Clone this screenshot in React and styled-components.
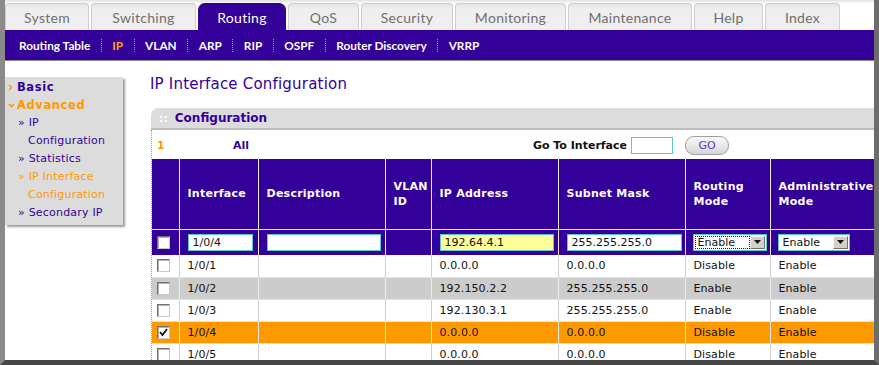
import React from 'react';
import styled, { createGlobalStyle } from 'styled-components';

const PURPLE = '#330099';
const ORANGE = '#ff9900';
const VERDANA = '"DejaVu Sans", Verdana, sans-serif';
const FUTURA = 'Lato, "Noto Sans", sans-serif';

const Global = createGlobalStyle`
  html, body { margin: 0; padding: 0; background: #fff; }
  * { box-sizing: border-box; }
`;

const Frame = styled.div`
  width: 879px;
  height: 365px;
  overflow: hidden;
  border-style: solid;
  border-width: 0 5px 5px 5px;
  border-color: #888 #6c6c6c #474747 #8a8a8a;
  background: #fff;
  display: flex;
  flex-direction: column;
`;

/* top tabs */
const TabBar = styled.div`
  display: flex;
  gap: 2px;
  height: 30px;
  padding-top: 3px;
  background: linear-gradient(#e2e2e2, #fff 4px);
  flex-shrink: 0;
`;

const Tab = styled.div`
  width: ${({ w }) => w}px;
  height: 27px;
  border: 1px solid ${({ active }) => (active ? PURPLE : '#cfcfcf')};
  border-bottom: none;
  border-radius: ${({ active }) => (active ? '7px 7px 0 0' : '4px 4px 0 0')};
  background: ${({ active }) =>
    active ? PURPLE : 'linear-gradient(#e4e4e4, #efefef 5px)'};
  color: ${({ active }) => (active ? '#fff' : '#707070')};
  font-family: ${FUTURA};
  font-size: 14px;
  letter-spacing: 0.3px;
  display: flex;
  align-items: center;
  justify-content: center;
`;

const SubNav = styled.div`
  height: 31px;
  background: ${PURPLE};
  border-bottom: 1px solid #8a8a8a;
  display: flex;
  align-items: center;
  padding-left: 14px;
  flex-shrink: 0;
  font-family: ${FUTURA};
  font-weight: 700;
  font-size: 11.8px;
  color: #fff;
`;

const SubItem = styled.span`
  color: ${({ active }) => (active ? '#ffa21a' : '#fff')};
`;

const SubSep = styled.span`
  display: inline-block;
  width: 0;
  height: 13px;
  border-left: 1px dotted rgba(255, 255, 255, 0.55);
  margin: 0 10.5px;
`;

/* body */
const Body = styled.div`
  display: flex;
  align-items: flex-start;
  flex: 1;
  min-height: 0;
`;

const Sidebar = styled.div`
  width: 118px;
  height: 148px;
  margin-top: 16px;
  background: #dcdcdc;
  box-shadow: 2px 2px 2px #9a9a9a;
  padding: 1px 0 0 3px;
  font-family: ${VERDANA};
  font-size: 11px;
  line-height: 18px;
  flex-shrink: 0;
`;

const NavHead = styled.div`
  font-weight: 700;
  font-size: 11.5px;
  letter-spacing: 0.6px;
  color: ${({ open }) => (open ? ORANGE : PURPLE)};
  display: flex;
  align-items: center;
`;

const Arrow = styled.span`
  width: 9px;
  display: flex;
  align-items: center;
`;

const NavItem = styled.div`
  color: ${({ active }) => (active ? ORANGE : PURPLE)};
  padding-left: ${({ cont }) => (cont ? 20 : 10)}px;
  letter-spacing: 0.2px;
  white-space: nowrap;
`;

const Main = styled.div`
  flex: 1;
  margin-left: 28px;
  padding-top: 14px;
  min-width: 0;
`;

const Title = styled.h1`
  margin: 0 0 15px -1px;
  font-family: ${VERDANA};
  font-weight: 400;
  font-size: 15px;
  line-height: 18px;
  color: ${PURPLE};
  letter-spacing: 0.2px;
`;

const BoxHead = styled.div`
  height: 22px;
  background: #dcdcdc;
  border-bottom: 2px solid #bdbdbd;
  border-top-left-radius: 7px;
  display: flex;
  align-items: center;
  padding-left: 8px;
  font-family: ${VERDANA};
  font-weight: 700;
  font-size: 12px;
  color: ${PURPLE};
`;

const Dots = styled.span`
  color: #fff;
  margin-right: 7px;
  font-size: 11px;
`;

const BoxBody = styled.div`
  border-left: 1px dotted #a0a0a0;
`;

const Toolbar = styled.div`
  height: 29px;
  display: flex;
  align-items: center;
  padding: 1px 145px 0 5px;
  font-family: ${VERDANA};
  font-weight: 700;
  font-size: 11px;
`;

const PageNum = styled.span`
  color: ${ORANGE};
  width: 76px;
`;

const AllLink = styled.span`
  color: ${PURPLE};
  flex: 1;
`;

const GoLabel = styled.span`
  color: #111;
`;

const GoInput = styled.div`
  width: 42px;
  height: 17px;
  margin-left: 4px;
  border: 1px solid #5cc8c8;
  background: #fff;
`;

const GoButton = styled.div`
  width: 44px;
  height: 19px;
  margin-left: 12px;
  border: 1px solid #a0a0a0;
  border-radius: 9px;
  background: linear-gradient(#fafafa, #d6d6d6);
  color: #6633cc;
  font-weight: 400;
  font-size: 11px;
  display: flex;
  align-items: center;
  justify-content: center;
`;

const Table = styled.table`
  table-layout: fixed;
  width: 722px;
  border-collapse: collapse;
  font-family: ${VERDANA};
  font-size: 11px;
`;

const Th = styled.th`
  background: ${PURPLE};
  color: #fff;
  font-weight: 700;
  letter-spacing: 0.25px;
  text-align: left;
  vertical-align: middle;
  padding: 0 0 0 8px;
  height: 70px;
  line-height: 15px;
  white-space: nowrap;
  border-left: 1px solid #ece8cc;
  border-bottom: 1px solid #ece8cc;
  &:first-child { border-left: none; }
`;

const EditTd = styled.td`
  background: ${PURPLE};
  height: 26px;
  padding: 0 0 0 ${({ pad }) => pad ?? 8}px;
  border-left: 1px solid #ece8cc;
  vertical-align: middle;
  &:first-child { border-left: none; padding-left: 5px; }
`;

const rowBg = { white: '#fff', gray: '#cccccc', orange: ORANGE };

const Td = styled.td`
  background: ${({ tone }) => rowBg[tone]};
  color: #111;
  height: 22px;
  padding: 0 4px 0 8px;
  white-space: nowrap;
  overflow: hidden;
  border-left: 1px solid ${({ tone }) => (tone === 'white' ? '#cfcfcf' : '#eaeaea')};
  border-bottom: 1px solid #e2e2e2;
  vertical-align: middle;
  letter-spacing: 0.1px;
  &:first-child { border-left: none; padding-left: 5px; }
`;

const Box = styled.span`
  display: block;
  width: 13px;
  height: 13px;
  background: #fff;
  border: 1px solid #6f6f6f;
  border-right-color: #c8c8c8;
  border-bottom-color: #c8c8c8;
  box-shadow: inset 1px 1px 0 #b4b4b4;
  position: relative;
`;

const Field = styled.div`
  width: ${({ w }) => w}px;
  height: 17px;
  border: 1px solid #5cc8c8;
  background: ${({ hl }) => (hl ? '#ffff99' : '#fff')};
  color: #111;
  font-size: 11px;
  line-height: 15px;
  padding-left: 4px;
  white-space: nowrap;
`;

const Select = styled.div`
  width: ${({ w }) => w}px;
  height: 17px;
  border: 1px solid #5cc8c8;
  background: #fff;
  display: flex;
  align-items: stretch;
  padding: 1px;
`;

const SelText = styled.span`
  flex: 1;
  font-size: 11px;
  line-height: 13px;
  color: #111;
  padding-left: 3px;
  outline: ${({ focus }) => (focus ? '1px dotted #222' : 'none')};
  outline-offset: -1px;
`;

const SelBtn = styled.span`
  width: 15px;
  background: #d4d0c8;
  border: 1px solid;
  border-color: #f4f4f4 #707070 #707070 #f4f4f4;
  display: flex;
  align-items: center;
  justify-content: center;
`;

const Check = ({ checked }) => (
  <Box>
    {checked && (
      <svg width="11" height="11" viewBox="0 0 11 11" style={{ position: 'absolute', left: 0, top: 0 }}>
        <polyline points="2,5 4.5,8 9,2" fill="none" stroke="#111" strokeWidth="1.8" />
      </svg>
    )}
  </Box>
);

const Dropdown = ({ w, focus }) => (
  <Select w={w}>
    <SelText focus={focus}>Enable</SelText>
    <SelBtn>
      <svg width="7" height="4" viewBox="0 0 7 4">
        <polygon points="0,0 7,0 3.5,4" fill="#111" />
      </svg>
    </SelBtn>
  </Select>
);

const ChevronRight = () => (
  <svg width="5" height="7" viewBox="0 0 5 7">
    <polyline points="1,1 3.5,3.5 1,6" fill="none" stroke={ORANGE} strokeWidth="1.6" />
  </svg>
);

const ChevronDown = () => (
  <svg width="7" height="5" viewBox="0 0 7 5">
    <polyline points="1,1 3.5,3.5 6,1" fill="none" stroke={ORANGE} strokeWidth="1.6" />
  </svg>
);

const tabs = [
  { label: 'System', w: 84 },
  { label: 'Switching', w: 105 },
  { label: 'Routing', w: 88, active: true },
  { label: 'QoS', w: 71 },
  { label: 'Security', w: 92 },
  { label: 'Monitoring', w: 111 },
  { label: 'Maintenance', w: 124 },
  { label: 'Help', w: 69 },
  { label: 'Index', w: 75 },
];

const subItems = ['Routing Table', 'IP', 'VLAN', 'ARP', 'RIP', 'OSPF', 'Router Discovery', 'VRRP'];

const cols = [27, 79, 127, 46, 127, 127, 85, 104];

const rows = [
  { intf: '1/0/1', ip: '0.0.0.0', mask: '0.0.0.0', routing: 'Disable', admin: 'Enable', tone: 'white' },
  { intf: '1/0/2', ip: '192.150.2.2', mask: '255.255.255.0', routing: 'Enable', admin: 'Enable', tone: 'gray' },
  { intf: '1/0/3', ip: '192.130.3.1', mask: '255.255.255.0', routing: 'Enable', admin: 'Enable', tone: 'white' },
  { intf: '1/0/4', ip: '0.0.0.0', mask: '0.0.0.0', routing: 'Disable', admin: 'Enable', tone: 'orange', checked: true },
  { intf: '1/0/5', ip: '0.0.0.0', mask: '0.0.0.0', routing: 'Disable', admin: 'Enable', tone: 'white' },
];

export default function App() {
  return (
    <Frame>
      <Global />
      <TabBar>
        {tabs.map(t => (
          <Tab key={t.label} w={t.w} active={t.active}>
            {t.label}
          </Tab>
        ))}
      </TabBar>
      <SubNav>
        {subItems.map((s, i) => (
          <React.Fragment key={s}>
            {i > 0 && <SubSep />}
            <SubItem active={s === 'IP'}>{s}</SubItem>
          </React.Fragment>
        ))}
      </SubNav>
      <Body>
        <Sidebar>
          <NavHead>
            <Arrow><ChevronRight /></Arrow>Basic
          </NavHead>
          <NavHead open>
            <Arrow><ChevronDown /></Arrow>Advanced
          </NavHead>
          <NavItem>» IP</NavItem>
          <NavItem cont>Configuration</NavItem>
          <NavItem>» Statistics</NavItem>
          <NavItem active>» IP Interface</NavItem>
          <NavItem active cont>Configuration</NavItem>
          <NavItem>» Secondary IP</NavItem>
        </Sidebar>
        <Main>
          <Title>IP Interface Configuration</Title>
          <BoxHead>
            <Dots>::</Dots>Configuration
          </BoxHead>
          <BoxBody>
            <Toolbar>
              <PageNum>1</PageNum>
              <AllLink>All</AllLink>
              <GoLabel>Go To Interface</GoLabel>
              <GoInput />
              <GoButton>GO</GoButton>
            </Toolbar>
            <Table>
              <colgroup>
                {cols.map((w, i) => (
                  <col key={i} style={{ width: w }} />
                ))}
              </colgroup>
              <thead>
                <tr>
                  <Th />
                  <Th>Interface</Th>
                  <Th>Description</Th>
                  <Th>VLAN<br />ID</Th>
                  <Th>IP Address</Th>
                  <Th>Subnet Mask</Th>
                  <Th>Routing<br />Mode</Th>
                  <Th>Administrative<br />Mode</Th>
                </tr>
              </thead>
              <tbody>
                <tr>
                  <EditTd><Check /></EditTd>
                  <EditTd><Field w={65}>1/0/4</Field></EditTd>
                  <EditTd><Field w={114} /></EditTd>
                  <EditTd />
                  <EditTd><Field w={114} hl>192.64.4.1</Field></EditTd>
                  <EditTd><Field w={115}>255.255.255.0</Field></EditTd>
                  <EditTd pad={7}><Dropdown w={74} focus /></EditTd>
                  <EditTd pad={7}><Dropdown w={72} /></EditTd>
                </tr>
                {rows.map(r => (
                  <tr key={r.intf}>
                    <Td tone={r.tone}><Check checked={r.checked} /></Td>
                    <Td tone={r.tone}>{r.intf}</Td>
                    <Td tone={r.tone} />
                    <Td tone={r.tone} />
                    <Td tone={r.tone}>{r.ip}</Td>
                    <Td tone={r.tone}>{r.mask}</Td>
                    <Td tone={r.tone}>{r.routing}</Td>
                    <Td tone={r.tone}>{r.admin}</Td>
                  </tr>
                ))}
              </tbody>
            </Table>
          </BoxBody>
        </Main>
      </Body>
    </Frame>
  );
}
